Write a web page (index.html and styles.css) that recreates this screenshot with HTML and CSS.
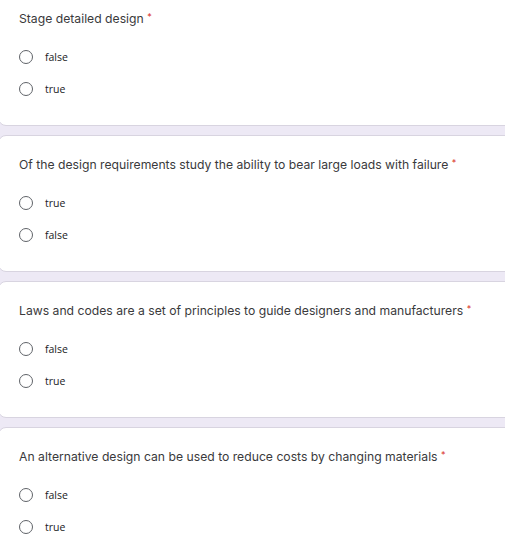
FILE: index.html
```html
<!DOCTYPE html>
<html>
<head>
<meta charset="utf-8">
<link rel="stylesheet" href="styles.css">
</head>
<body>
<div class="page">
  <div class="card">
    <div class="title">Stage detailed design <span class="req">*</span></div>
    <div class="options">
      <div class="opt"><span class="radio"></span><span class="label">false</span></div>
      <div class="opt"><span class="radio"></span><span class="label">true</span></div>
    </div>
  </div>
  <div class="card">
    <div class="title">Of the design requirements study the ability to bear large loads with failure <span class="req">*</span></div>
    <div class="options">
      <div class="opt"><span class="radio"></span><span class="label">true</span></div>
      <div class="opt"><span class="radio"></span><span class="label">false</span></div>
    </div>
  </div>
  <div class="card">
    <div class="title">Laws and codes are a set of principles to guide designers and manufacturers <span class="req">*</span></div>
    <div class="options">
      <div class="opt"><span class="radio"></span><span class="label">false</span></div>
      <div class="opt"><span class="radio"></span><span class="label">true</span></div>
    </div>
  </div>
  <div class="card">
    <div class="title">An alternative design can be used to reduce costs by changing materials <span class="req">*</span></div>
    <div class="options">
      <div class="opt"><span class="radio"></span><span class="label">false</span></div>
      <div class="opt"><span class="radio"></span><span class="label">true</span></div>
    </div>
  </div>
</div>
</body>
</html>
```
FILE: styles.css
```css
html, body {
  margin: 0;
  padding: 0;
  background: #ede9f5;
  overflow: hidden;
}
body {
  font-family: Inter, Roboto, "Noto Sans", sans-serif;
  color: #202124;
}
.page {
  display: flex;
  flex-direction: column;
  gap: 9px;
  margin-top: -11px;
  margin-left: -2px;
  margin-right: -10px;
}
.card {
  background: #fff;
  border: 1px solid #d8d4e0;
  border-radius: 8px;
  padding: 17px 0 21px 20px;
  box-sizing: border-box;
  height: 137px;
}
.title {
  font-size: 12.2px;
  font-weight: 400;
  line-height: 20px;
  color: #3a3a3c;
  white-space: nowrap;
}
.req {
  color: #d93025;
  font-size: 9px;
  vertical-align: 3px;
}
.options {
  margin-top: 12px;
  display: flex;
  flex-direction: column;
}
.opt {
  height: 32px;
  display: flex;
  align-items: center;
}
.radio {
  width: 12px;
  height: 12px;
  border: 1.5px solid #5f6368;
  border-radius: 50%;
  flex: none;
}
.label {
  margin-left: 12px;
  font-family: "Open Sans", "Noto Sans", sans-serif;
  font-size: 10.5px;
  color: #202124;
}
```
